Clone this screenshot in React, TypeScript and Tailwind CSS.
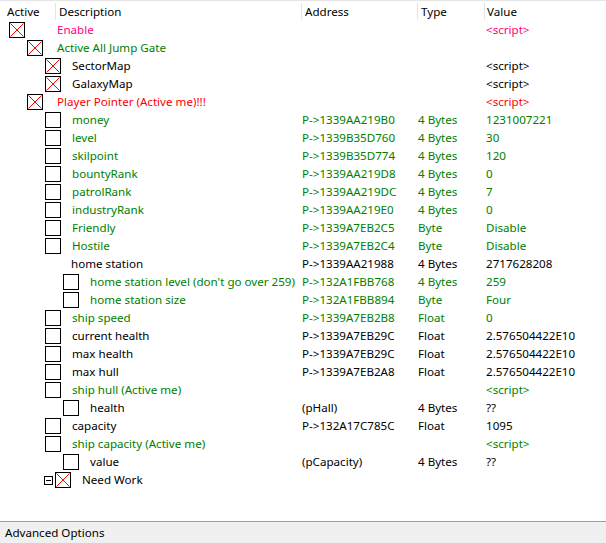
import React from "react";

type Row = {
  pad: string;
  box?: "on" | "off";
  gap: string;
  text: string;
  color: string;
  addr?: string;
  type?: string;
  value?: string;
  valueColor?: string;
  expander?: boolean;
};

const G = "text-[#008000]";
const K = "text-[#000000]";
const R = "text-[#ff0000]";
const P = "text-[#ff0080]";

const rows: Row[] = [
  { pad: "pl-[9px]", box: "on", gap: "ml-[32px]", text: "Enable", color: P, value: "<script>", valueColor: P },
  { pad: "pl-[27px]", box: "on", gap: "ml-[14px]", text: "Active All Jump Gate", color: G },
  { pad: "pl-[45px]", box: "on", gap: "ml-[11px]", text: "SectorMap", color: K, value: "<script>", valueColor: K },
  { pad: "pl-[45px]", box: "on", gap: "ml-[11px]", text: "GalaxyMap", color: K, value: "<script>", valueColor: K },
  { pad: "pl-[27px]", box: "on", gap: "ml-[14px]", text: "Player Pointer (Active me)!!!", color: R, value: "<script>", valueColor: R },
  { pad: "pl-[45px]", box: "off", gap: "ml-[11px]", text: "money", color: G, addr: "P->1339AA219B0", type: "4 Bytes", value: "1231007221" },
  { pad: "pl-[45px]", box: "off", gap: "ml-[11px]", text: "level", color: G, addr: "P->1339B35D760", type: "4 Bytes", value: "30" },
  { pad: "pl-[45px]", box: "off", gap: "ml-[11px]", text: "skilpoint", color: G, addr: "P->1339B35D774", type: "4 Bytes", value: "120" },
  { pad: "pl-[45px]", box: "off", gap: "ml-[11px]", text: "bountyRank", color: G, addr: "P->1339AA219D8", type: "4 Bytes", value: "0" },
  { pad: "pl-[45px]", box: "off", gap: "ml-[11px]", text: "patrolRank", color: G, addr: "P->1339AA219DC", type: "4 Bytes", value: "7" },
  { pad: "pl-[45px]", box: "off", gap: "ml-[11px]", text: "industryRank", color: G, addr: "P->1339AA219E0", type: "4 Bytes", value: "0" },
  { pad: "pl-[45px]", box: "off", gap: "ml-[11px]", text: "Friendly", color: G, addr: "P->1339A7EB2C5", type: "Byte", value: "Disable" },
  { pad: "pl-[45px]", box: "off", gap: "ml-[11px]", text: "Hostile", color: G, addr: "P->1339A7EB2C4", type: "Byte", value: "Disable" },
  { pad: "pl-[71px]", gap: "ml-0", text: "home station", color: K, addr: "P->1339AA21988", type: "4 Bytes", value: "2717628208" },
  { pad: "pl-[63px]", box: "off", gap: "ml-[11px]", text: "home station level (don't go over 259)", color: G, addr: "P->132A1FBB768", type: "4 Bytes", value: "259" },
  { pad: "pl-[63px]", box: "off", gap: "ml-[11px]", text: "home station size", color: G, addr: "P->132A1FBB894", type: "Byte", value: "Four" },
  { pad: "pl-[45px]", box: "off", gap: "ml-[11px]", text: "ship speed", color: G, addr: "P->1339A7EB2B8", type: "Float", value: "0" },
  { pad: "pl-[45px]", box: "off", gap: "ml-[11px]", text: "current health", color: K, addr: "P->1339A7EB29C", type: "Float", value: "2.576504422E10" },
  { pad: "pl-[45px]", box: "off", gap: "ml-[11px]", text: "max health", color: K, addr: "P->1339A7EB29C", type: "Float", value: "2.576504422E10" },
  { pad: "pl-[45px]", box: "off", gap: "ml-[11px]", text: "max hull", color: K, addr: "P->1339A7EB2A8", type: "Float", value: "2.576504422E10" },
  { pad: "pl-[45px]", box: "off", gap: "ml-[11px]", text: "ship hull (Active me)", color: G, value: "<script>" },
  { pad: "pl-[63px]", box: "off", gap: "ml-[11px]", text: "health", color: K, addr: "(pHall)", type: "4 Bytes", value: "??" },
  { pad: "pl-[45px]", box: "off", gap: "ml-[11px]", text: "capacity", color: K, addr: "P->132A17C785C", type: "Float", value: "1095" },
  { pad: "pl-[45px]", box: "off", gap: "ml-[11px]", text: "ship capacity (Active me)", color: G, value: "<script>" },
  { pad: "pl-[63px]", box: "off", gap: "ml-[11px]", text: "value", color: K, addr: "(pCapacity)", type: "4 Bytes", value: "??" },
  { pad: "pl-[44px]", box: "on", gap: "ml-[11px]", text: "Need Work", color: K, expander: true },
];

function Check({ on }: { on: boolean }) {
  return (
    <div className="w-[16px] h-[16px] border border-black bg-white shrink-0">
      {on && (
        <svg width="14" height="14" viewBox="0 0 14 14" className="block">
          <path d="M0.5 0.5 L13.5 13.5 M13.5 0.5 L0.5 13.5" stroke="#ff0000" strokeWidth="1" />
        </svg>
      )}
    </div>
  );
}

function Expander() {
  return (
    <div className="w-[9px] h-[9px] border border-black bg-white shrink-0 mr-[2px] flex items-center justify-center">
      <div className="w-[5px] h-px bg-black" />
    </div>
  );
}

export default function App() {
  return (
    <div
      className="w-[606px] h-[543px] flex flex-col bg-white text-[11.6px] leading-none overflow-hidden"
      style={{ fontFamily: '"Segoe UI", "Noto Sans", sans-serif' }}
    >
      <div className="flex h-[21px] border-t border-[#e5e5e5] text-black shrink-0 pt-[1px]">
        <div className="w-[56px] pl-[7px] flex items-center border-r border-[#e5e5e5] my-[1px]">Active</div>
        <div className="w-[246px] pl-[3px] flex items-center border-r border-[#e5e5e5] my-[1px]">Description</div>
        <div className="w-[116px] pl-[3px] flex items-center border-r border-[#e5e5e5] my-[1px]">Address</div>
        <div className="w-[67px] pl-[3px] flex items-center border-r border-[#e5e5e5] my-[1px]">Type</div>
        <div className="flex-1 pl-[2px] flex items-center">Value</div>
      </div>

      <div className="flex-1 flex flex-col">
        {rows.map((r, i) => {
          const rowColor = r.color;
          const valColor = r.valueColor ?? r.color;
          return (
            <div key={i} className="flex h-[18px] items-center">
              <div className={`w-[302px] flex items-center ${r.pad}`}>
                {r.expander && <Expander />}
                {r.box && <Check on={r.box === "on"} />}
                <span className={`${r.gap} ${rowColor} whitespace-nowrap`}>{r.text}</span>
              </div>
              <div className={`w-[116px] ${rowColor} whitespace-nowrap`}>{r.addr ?? ""}</div>
              <div className={`w-[67px] ${rowColor} whitespace-nowrap`}>{r.type ?? ""}</div>
              <div className={`flex-1 pl-[1px] ${valColor} whitespace-nowrap`}>{r.value ?? ""}</div>
            </div>
          );
        })}
      </div>

      <div className="h-[22px] border-t border-[#a0a0a0] bg-[#f0f0f0] flex items-center pl-[5px] text-black shrink-0">
        Advanced Options
      </div>
    </div>
  );
}
